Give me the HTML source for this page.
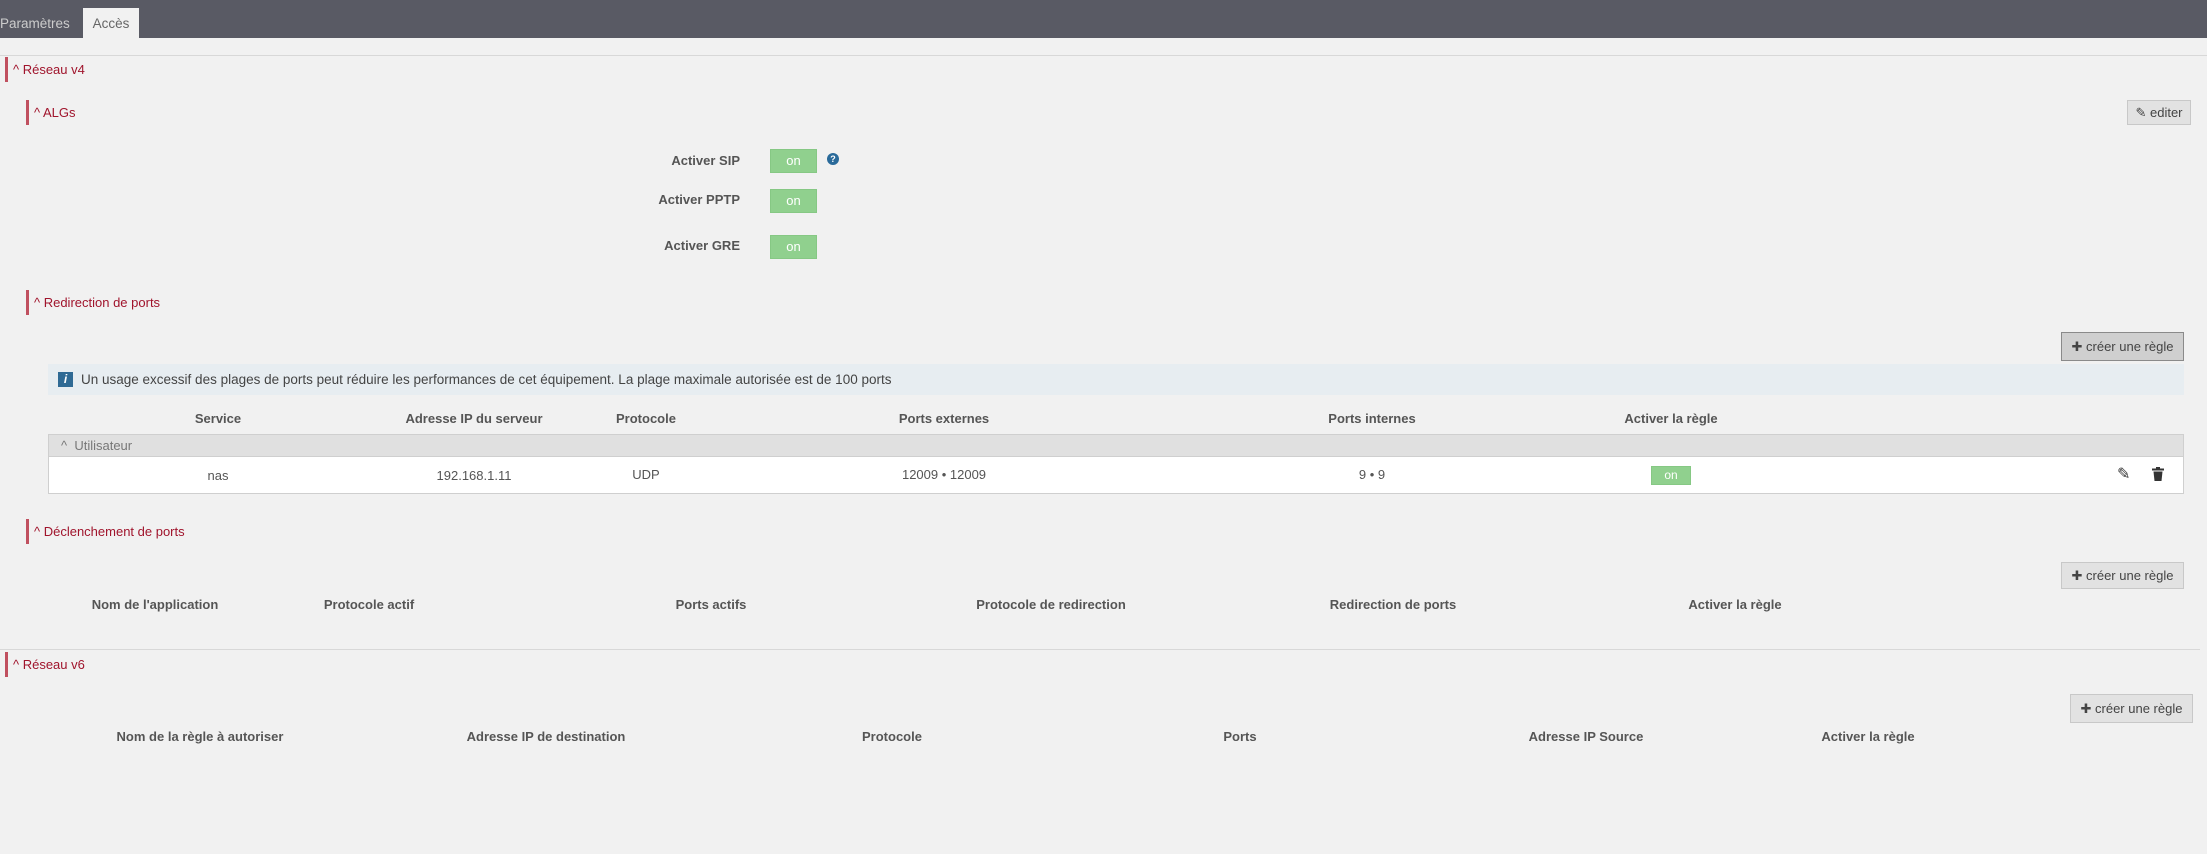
<!DOCTYPE html>
<html><head><meta charset="utf-8"><style>
*{margin:0;padding:0;box-sizing:border-box}
body{width:2207px;height:854px;background:#f1f1f1;font-family:"Liberation Sans",sans-serif;color:#555;position:relative;overflow:hidden;font-size:14px}
.a{position:absolute;white-space:nowrap}
.top{left:0;top:0;width:2207px;height:38px;background:#595a64}
.tab{top:8px;height:31px;line-height:31px;font-size:13.5px}
.sec{border-left:3px solid #c0505f;height:25px;line-height:26px;color:#a0142c;font-size:13px;padding-left:5px}
.lbl{font-weight:bold;font-size:13px;color:#555;text-align:right}
.tg{background:#90d08e;color:#fff;text-align:center;font-size:13px;border:1px solid #86c884}
.btn{background:#e2e2e2;border:1px solid #c8c8c8;color:#444;font-size:13px;text-align:center}
.th{font-weight:bold;font-size:13px;color:#555;transform:translateX(-50%)}
.td{font-size:13px;color:#555;transform:translateX(-50%)}
.hr{height:1px;background:#d8d8d8}
</style></head><body>
<div class="a top"></div>
<div class="a tab" style="left:0;color:#ccc">Paramètres</div>
<div class="a tab" style="left:83px;width:56px;background:#f1f1f1;text-align:center;color:#666">Accès</div>
<div class="a hr" style="left:0;top:55px;width:2207px"></div>

<div class="a sec" style="left:5px;top:57px">^ Réseau v4</div>
<div class="a sec" style="left:26px;top:100px">^ ALGs</div>
<div class="a btn" style="left:2127px;top:100px;width:64px;height:25px;line-height:23px">&#9998; editer</div>

<div class="a lbl" style="left:600px;width:140px;top:153px">Activer SIP</div>
<div class="a tg" style="left:770px;top:149px;width:47px;height:24px;line-height:22px">on</div>
<div class="a" style="left:827px;top:153px;width:12px;height:12px;border-radius:50%;background:#2a6a9a;color:#fff;font-size:9px;text-align:center;line-height:12px;font-weight:bold">?</div>
<div class="a lbl" style="left:600px;width:140px;top:192px">Activer PPTP</div>
<div class="a tg" style="left:770px;top:189px;width:47px;height:24px;line-height:22px">on</div>
<div class="a lbl" style="left:600px;width:140px;top:238px">Activer GRE</div>
<div class="a tg" style="left:770px;top:235px;width:47px;height:24px;line-height:22px">on</div>

<div class="a sec" style="left:26px;top:290px">^ Redirection de ports</div>
<div class="a btn" style="left:2061px;top:332px;width:123px;height:29px;line-height:27px;background:#cfcfcf;border-color:#8a8a8a">&#10010; créer une règle</div>
<div class="a" style="left:48px;top:364px;width:2136px;height:31px;background:#e7edf1"></div>
<div class="a" style="left:58px;top:372px;width:15px;height:15px;background:#2f6a94;color:#fff;font-style:italic;font-weight:bold;font-size:12px;text-align:center;line-height:15px">i</div>
<div class="a" style="left:81px;top:372px;font-size:13.5px;color:#444">Un usage excessif des plages de ports peut réduire les performances de cet équipement. La plage maximale autorisée est de 100 ports</div>

<div class="a th" style="left:218px;top:411px">Service</div>
<div class="a th" style="left:474px;top:411px">Adresse IP du serveur</div>
<div class="a th" style="left:646px;top:411px">Protocole</div>
<div class="a th" style="left:944px;top:411px">Ports externes</div>
<div class="a th" style="left:1372px;top:411px">Ports internes</div>
<div class="a th" style="left:1671px;top:411px">Activer la règle</div>
<div class="a" style="left:48px;top:434px;width:2136px;height:60px;border:1px solid #cfcfcf;background:#fff"></div>
<div class="a" style="left:49px;top:435px;width:2134px;height:22px;background:#e0e0e0;border-bottom:1px solid #cfcfcf;font-size:13px;color:#777;line-height:21px;padding-left:12px">^&nbsp; Utilisateur</div>
<div class="a td" style="left:218px;top:468px">nas</div>
<div class="a td" style="left:474px;top:468px">192.168.1.11</div>
<div class="a td" style="left:646px;top:467px">UDP</div>
<div class="a td" style="left:944px;top:467px">12009 &bull; 12009</div>
<div class="a td" style="left:1372px;top:467px">9 &bull; 9</div>
<div class="a tg" style="left:1651px;top:466px;width:40px;height:19px;line-height:17px;font-size:12px">on</div>
<div class="a" style="left:2117px;top:464px;font-size:16px;color:#333">&#9998;</div>
<svg class="a" style="left:2152px;top:467px" width="12" height="14" viewBox="0 0 12 14"><rect x="0" y="1.5" width="12" height="2" fill="#333"/><rect x="4" y="0" width="4" height="2" fill="#333"/><path d="M1.5 4.5h9l-1 9.5h-7z" fill="#333"/></svg>

<div class="a sec" style="left:26px;top:519px">^ Déclenchement de ports</div>
<div class="a btn" style="left:2061px;top:562px;width:123px;height:27px;line-height:25px">&#10010; créer une règle</div>
<div class="a th" style="left:155px;top:597px">Nom de l'application</div>
<div class="a th" style="left:369px;top:597px">Protocole actif</div>
<div class="a th" style="left:711px;top:597px">Ports actifs</div>
<div class="a th" style="left:1051px;top:597px">Protocole de redirection</div>
<div class="a th" style="left:1393px;top:597px">Redirection de ports</div>
<div class="a th" style="left:1735px;top:597px">Activer la règle</div>
<div class="a hr" style="left:0;top:649px;width:2200px"></div>

<div class="a sec" style="left:5px;top:652px">^ Réseau v6</div>
<div class="a btn" style="left:2070px;top:694px;width:123px;height:29px;line-height:27px">&#10010; créer une règle</div>
<div class="a th" style="left:200px;top:729px">Nom de la règle à autoriser</div>
<div class="a th" style="left:546px;top:729px">Adresse IP de destination</div>
<div class="a th" style="left:892px;top:729px">Protocole</div>
<div class="a th" style="left:1240px;top:729px">Ports</div>
<div class="a th" style="left:1586px;top:729px">Adresse IP Source</div>
<div class="a th" style="left:1868px;top:729px">Activer la règle</div>
</body></html>
